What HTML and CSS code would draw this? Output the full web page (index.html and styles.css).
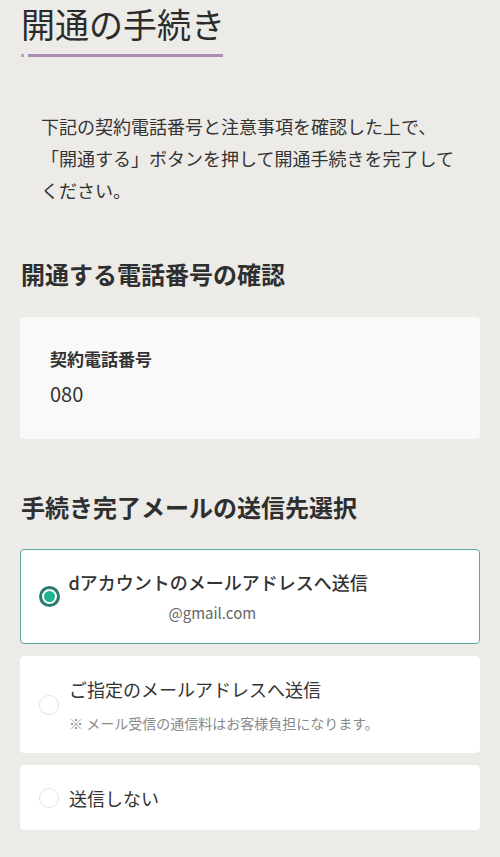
FILE: index.html
```html
<!DOCTYPE html>
<html lang="ja">
<head>
<meta charset="utf-8">
<title>開通の手続き</title>
<link rel="stylesheet" href="styles.css">
</head>
<body>
<main class="page">
  <h1 class="title">開通の手続き</h1>
  <div class="title-line"><span class="dot"></span><span class="bar"></span></div>

  <p class="lead">下記の契約電話番号と注意事項を確認した上で、<br>「開通する」ボタンを押して開通手続きを完了してください。</p>

  <h2 class="section-title first">開通する電話番号の確認</h2>
  <div class="info-card">
    <div class="info-label">契約電話番号</div>
    <div class="info-value">080</div>
  </div>

  <h2 class="section-title">手続き完了メールの送信先選択</h2>
  <div class="options">
    <div class="option selected">
      <span class="radio checked"></span>
      <div class="option-body">
        <div class="option-title">dアカウントのメールアドレスへ送信</div>
        <div class="option-mail">@gmail.com</div>
      </div>
    </div>
    <div class="option">
      <span class="radio"></span>
      <div class="option-body">
        <div class="option-title">ご指定のメールアドレスへ送信</div>
        <div class="option-note">※ メール受信の通信料はお客様負担になります。</div>
      </div>
    </div>
    <div class="option">
      <span class="radio"></span>
      <div class="option-body">
        <div class="option-title">送信しない</div>
      </div>
    </div>
  </div>
</main>
</body>
</html>
```

FILE: styles.css
```css
html, body {
  margin: 0;
  padding: 0;
  background: #ecebe8;
}

body {
  font-family: "Noto Sans CJK JP", "Noto Sans", sans-serif;
  color: #333333;
}

.page {
  padding: 2px 20px 40px 21px;
}

.title {
  margin: 0;
  font-size: 34px;
  font-weight: 400;
  line-height: 44px;
  color: #2b2b2b;
}

.title-line {
  display: flex;
  align-items: center;
  gap: 4px;
  margin-top: 8px;
  height: 3px;
}

.dot {
  width: 3px;
  height: 3px;
  background: #b6a2bd;
}

.bar {
  width: 195px;
  height: 3px;
  background: #ab8cb8;
}

.lead {
  margin: 53px 0 0;
  padding: 0 20px;
  font-size: 18px;
  line-height: 32px;
  color: #333333;
}

.section-title {
  margin: 50px 0 0;
  font-size: 24px;
  font-weight: 700;
  line-height: 36px;
  color: #2f2f2f;
}

.info-card {
  margin: 25px 0 0 -1px;
  background: #f9f9f9;
  border-radius: 4px;
  padding: 29px 30px 31px;
}

.info-label {
  font-size: 17px;
  font-weight: 700;
  line-height: 26px;
  color: #333333;
}

.info-value {
  margin-top: 8px;
  font-size: 20px;
  line-height: 28px;
  color: #333333;
}

.options {
  display: flex;
  flex-direction: column;
  gap: 12px;
  margin: 24px 0 0 -1px;
}

.option {
  display: flex;
  align-items: center;
  gap: 10px;
  background: #ffffff;
  border: 1px solid #ffffff;
  border-radius: 4px;
  padding: 18px 18px 17px;
}

.option.selected {
  gap: 9px;
  border: 1.5px solid #5aa89c;
  padding: 18px 17.5px;
}

.radio {
  flex: none;
  box-sizing: border-box;
  width: 20px;
  height: 20px;
  border-radius: 50%;
  border: 1.5px solid #e2e2e2;
  background: #ffffff;
}

.radio.checked {
  width: 21px;
  height: 21px;
  border: 3px solid #2b7b70;
  display: flex;
  align-items: center;
  justify-content: center;
}

.radio.checked::after {
  content: "";
  width: 11px;
  height: 11px;
  border-radius: 50%;
  background: #1db393;
}

.option-body {
  display: flex;
  flex-direction: column;
}

.option-title {
  font-size: 18px;
  line-height: 28px;
  color: #333333;
}

.option.selected .option-title {
  font-weight: 500;
}

.option-mail {
  margin-top: 5px;
  padding-left: 100px;
  font-size: 15px;
  line-height: 24px;
  color: #666666;
}

.option-note {
  margin-top: 8px;
  font-size: 14px;
  line-height: 24px;
  color: #8a8a8a;
}
```
